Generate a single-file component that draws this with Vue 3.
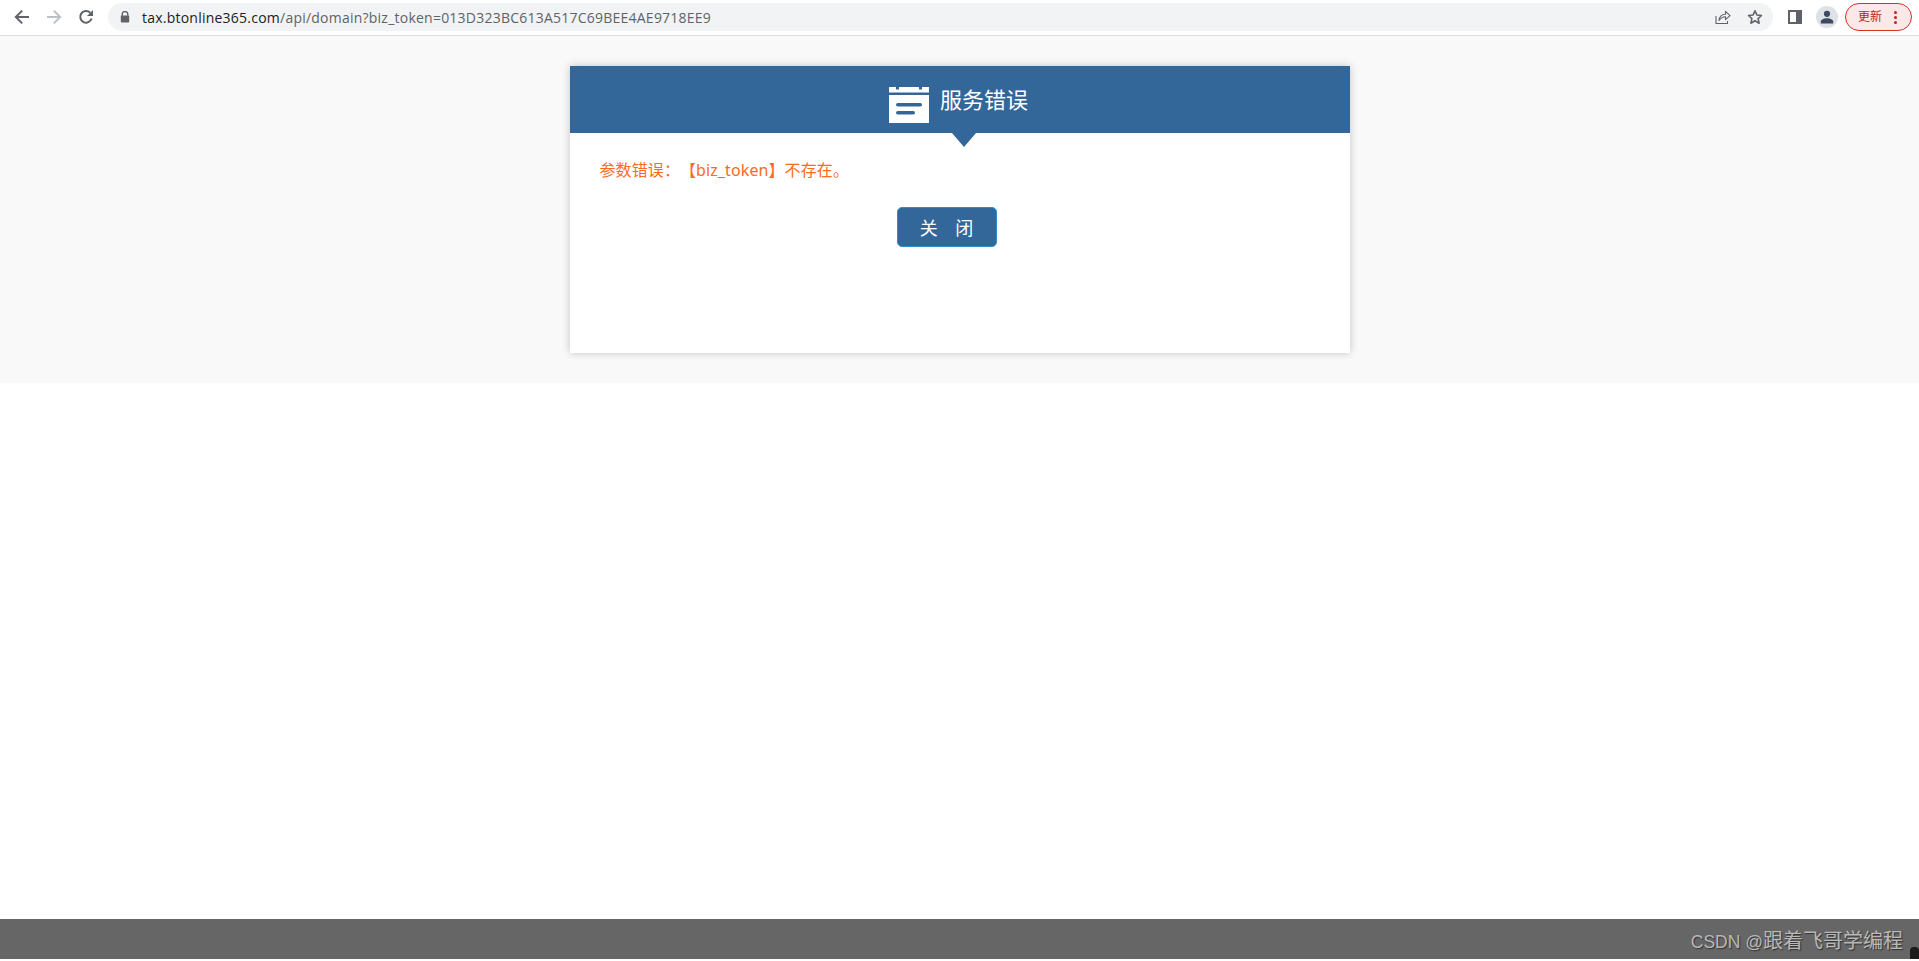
<script setup>
const url = { host: 'tax.btonline365.com', rest: '/api/domain?biz_token=013D323BC613A517C69BEE4AE9718EE9' }
</script>

<template>
  <div class="page">
    <header class="chrome">
      <div class="nav">
        <svg class="nav-icon" width="16" height="16" viewBox="0 0 16 16"><path d="M15 8H2.500M8.200 1.600 1.800 8l6.400 6.400" fill="none" stroke="#5f6368" stroke-width="2"/></svg>
        <svg class="nav-icon" width="16" height="16" viewBox="0 0 16 16"><path d="M1 8h12.500M7.800 1.600 14.200 8l-6.400 6.400" fill="none" stroke="#bdc1c6" stroke-width="2"/></svg>
        <svg class="nav-icon" width="16" height="16" viewBox="0 0 16 16"><path d="M13.600 9.500A5.800 5.800 0 1 1 12.200 3.800" fill="none" stroke="#5f6368" stroke-width="2"/><path d="M15 1v6H9z" fill="#5f6368"/></svg>
      </div>
      <div class="omnibox">
        <svg class="lock" width="10" height="12" viewBox="0 0 10 12"><path d="M2.200 5V3.400a2.800 2.800 0 0 1 5.600 0V5" fill="none" stroke="#5f6368" stroke-width="1.300"/><rect x="0.800" y="4.600" width="8.400" height="7" rx="1" fill="#5f6368"/></svg>
        <span class="url"><span class="host">{{ url.host }}</span>{{ url.rest }}</span>
        <svg class="share" width="16" height="16" viewBox="0 0 16 16"><path d="M1 7v7.500h11.500V12" fill="none" stroke="#5f6368" stroke-width="1.100"/><path d="M4 11.500C4.500 7.500 7 5.300 10.500 5.300V2.400L15 6.600l-4.500 4V7.800C7.800 7.800 5.800 9 4 11.500z" fill="none" stroke="#5f6368" stroke-width="1.100" stroke-linejoin="round"/></svg>
        <svg class="star" width="16" height="16" viewBox="0 0 16 16"><path d="M8 1.800 9.900 6l4.600.5-3.400 3.100 1 4.600L8 11.800l-4.100 2.400 1-4.600L1.500 6.500 6.100 6z" fill="none" stroke="#5f6368" stroke-width="1.600" stroke-linejoin="round"/></svg>
      </div>
      <div class="panel-icon"></div>
      <div class="avatar">
        <svg width="14" height="14" viewBox="0 0 14 14"><circle cx="7" cy="3.800" r="3.100" fill="#3c4a63"/><path d="M0.800 13.500V11.500C0.800 9.500 4 8.200 7 8.200s6.200 1.300 6.200 3.300v2z" fill="#3c4a63"/></svg>
      </div>
      <div class="update">
        <span class="update-text">更新</span>
        <span class="dots"><i></i><i></i><i></i></span>
      </div>
    </header>

    <section class="stage">
      <div class="card">
        <div class="card-head">
          <svg class="head-icon" width="40" height="36" viewBox="0 0 40 36">
            <path d="M0 0H7V2.500H10V0H30V2.500H33V0H40V5.500H0z" fill="#fff"/>
            <rect x="0" y="8" width="40" height="28" fill="#fff"/>
            <rect x="7" y="16" width="26" height="3.500" rx="1.700" fill="#33679a"/>
            <rect x="7" y="24" width="19" height="3.500" rx="1.700" fill="#33679a"/>
          </svg>
          <h1 class="title">服务错误</h1>
          <span class="arrow"></span>
        </div>
        <div class="card-body">
          <p class="msg">参数错误：【biz_token】不存在。</p>
          <div class="actions">
            <button class="close" type="button">关 闭</button>
          </div>
        </div>
      </div>
    </section>

    <div class="spacer"></div>

    <footer class="foot">
      <span class="mark"><span class="mark-latin">CSDN @</span>跟着飞哥学编程</span>
      <span class="blob"></span>
    </footer>
  </div>
</template>

<style>
html, body { margin: 0; background: #fff; }
</style>

<style scoped>
.page {
  height: 961px;
  display: flex;
  flex-direction: column;
  overflow: hidden;
  font-family: "Noto Sans", "Noto Sans CJK SC", sans-serif;
  text-spacing-trim: space-all;
}
.chrome {
  height: 34px;
  padding-bottom: 1px;
  box-sizing: content-box;
  border-bottom: 1px solid #dadce0;
  display: flex;
  align-items: center;
  background: #fff;
  flex: none;
}
.nav {
  display: flex;
  align-items: center;
  gap: 16px;
  padding-left: 14px;
  width: 94px;
  box-sizing: border-box;
}
.nav-icon { flex: none; }
.omnibox {
  margin-left: 14px;
  width: 1665px;
  height: 28px;
  border-radius: 14px;
  background: #f1f3f4;
  display: flex;
  align-items: center;
  padding-left: 12px;
  box-sizing: border-box;
  flex: none;
}
.lock { flex: none; }
.url {
  margin-left: 12px;
  font-family: "Open Sans", sans-serif;
  font-size: 14px;
  color: #5f6368;
  white-space: nowrap;
  flex: 1;
  letter-spacing: 0.23px;
}
.host { color: #202124; }
.share { flex: none; margin-right: 16px; }
.star { flex: none; margin-right: 10px; }
.panel-icon {
  margin-left: 15px;
  width: 14px;
  height: 14px;
  box-sizing: border-box;
  border: 2px solid #5f6368;
  border-right-width: 6px;
  flex: none;
}
.avatar {
  margin-left: 14px;
  width: 22px;
  height: 22px;
  border-radius: 50%;
  background: #dee1e6;
  display: flex;
  align-items: center;
  justify-content: center;
  flex: none;
}
.update {
  margin-left: 7px;
  width: 67px;
  height: 28px;
  box-sizing: border-box;
  border: 1px solid #d93025;
  border-radius: 14px;
  background: #fce8e6;
  display: flex;
  align-items: center;
  padding-left: 12px;
  flex: none;
}
.update-text { font-size: 12px; color: #c5221f; line-height: 1; }
.dots {
  margin-left: 12px;
  display: flex;
  flex-direction: column;
  gap: 2px;
}
.dots i { width: 3px; height: 3px; border-radius: 50%; background: #c5221f; display: block; }
.stage {
  background: #f9f9f9;
  padding: 30px 0;
  display: flex;
  justify-content: center;
  flex: none;
}
.card {
  width: 780px;
  height: 287px;
  background: #fff;
  box-shadow: 0 0 8px rgba(0, 0, 0, 0.22);
}
.card-head {
  position: relative;
  height: 67px;
  background: #33679a;
  display: flex;
  align-items: center;
  justify-content: center;
  gap: 11px;
  padding-right: 2px;
}
.head-icon { flex: none; align-self: flex-start; margin-top: 21px; }
.title {
  margin: 0 0 2px;
  font-size: 22px;
  font-weight: 400;
  line-height: 1;
  color: #fff;
}
.arrow {
  position: absolute;
  left: 382px;
  top: 100%;
  width: 0;
  height: 0;
  border-left: 12px solid transparent;
  border-right: 12px solid transparent;
  border-top: 14px solid #33679a;
}
.card-body { padding: 25px 30px 0; }
.msg {
  margin: 0;
  font-size: 16px;
  line-height: 24px;
  letter-spacing: 0.1px;
  color: #ff6a20;
}
.actions {
  margin-top: 25px;
  padding-left: 297px;
}
.close {
  width: 100px;
  height: 40px;
  box-sizing: border-box;
  border: 1px solid #2a8fc9;
  border-radius: 5px;
  background: #33679a;
  color: #fff;
  font-family: inherit;
  font-size: 18px;
  padding: 0;
  word-spacing: 13px;
}
.spacer { flex: 1; }
.foot {
  position: relative;
  height: 40px;
  margin-bottom: 2px;
  background: #666;
  display: flex;
  align-items: center;
  justify-content: flex-end;
  padding-right: 16px;
  flex: none;
}
.mark {
  color: #b8b8b8;
  font-size: 20px;
  text-shadow: 1px 1px 1px #333;
  white-space: nowrap;
}
.mark-latin { font-family: "Liberation Sans", sans-serif; font-size: 17.500px; }
.blob {
  position: absolute;
  right: 0;
  bottom: 0;
  width: 9px;
  height: 12px;
  border-radius: 4px 4px 0 0;
  background: #1c1c1c;
}
</style>
